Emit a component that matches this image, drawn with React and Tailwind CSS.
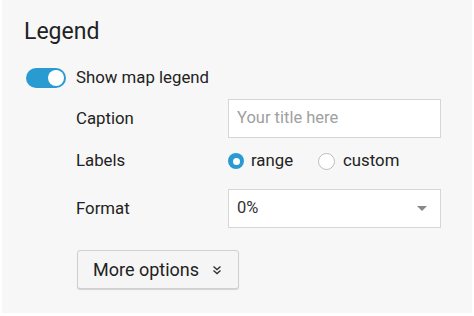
export default function App() {
  return (
    <div className="w-[474px] h-[316px] bg-white" style={{ fontFamily: "Roboto, 'Liberation Sans', sans-serif" }}>
      <div className="ml-[2px] w-[470px] h-[313px] bg-[#f7f7f7] pl-[22px] pt-[17px] text-[#222]">
        <h2 className="text-[23px] leading-[30px] font-normal">Legend</h2>
        <div className="mt-[20px] flex items-center h-[22px]">
          <div className="ml-[2px] w-[40px] h-[20px] rounded-full bg-[#2a9bd0] flex items-center justify-end pr-[2px]">
            <div className="w-[16px] h-[16px] rounded-full bg-white" />
          </div>
          <span className="ml-[10px] text-[16.8px]">Show map legend</span>
        </div>
        <div className="pl-[52px]">
          <div className="mt-[10px] flex items-center h-[39px]">
            <span className="w-[152px] text-[16.8px]">Caption</span>
            <div className="w-[213px] h-[39px] bg-white border border-[#d6d6d6] flex items-center px-[8px] text-[16.5px] text-[#a0a0a0]">Your title here</div>
          </div>
          <div className="mt-[6px] flex items-center h-[34px]">
            <span className="w-[152px] text-[16.8px]">Labels</span>
            <div className="flex items-center">
              <div className="w-[16px] h-[16px] rounded-full bg-[#2a9bd0] flex items-center justify-center">
                <div className="w-[7px] h-[7px] rounded-full bg-white" />
              </div>
              <span className="ml-[7px] text-[16.8px]">range</span>
              <div className="ml-[25px] w-[17px] h-[17px] rounded-full border border-[#bdbdbd] bg-white" />
              <span className="ml-[8px] text-[16.8px]">custom</span>
            </div>
          </div>
          <div className="mt-[11px] flex items-center h-[39px]">
            <span className="w-[152px] text-[16.8px]">Format</span>
            <div className="w-[213px] h-[39px] bg-white border border-[#d6d6d6] flex items-center justify-between pl-[8px] pr-[13px] text-[16.5px] text-[#333]">
              <span>0%</span>
              <div className="w-0 h-0 border-l-[5px] border-r-[5px] border-t-[5px] border-l-transparent border-r-transparent border-t-[#888]" />
            </div>
          </div>
          <div className="mt-[22px] ml-[1px] w-[162px] h-[39px] rounded-[3px] border border-[#d0d0d0] bg-[#f5f5f5] shadow-[0_1px_1px_rgba(0,0,0,0.15)] flex items-center pl-[15px] text-[18px] text-[#222]">
            <span>More options</span>
            <svg className="ml-[13px]" width="10" height="10" viewBox="0 0 10 10" fill="none" stroke="#333" strokeWidth="1.4">
              <path d="M1.5 1.5 L5 4.5 L8.5 1.5" />
              <path d="M1.5 5.5 L5 8.5 L8.5 5.5" />
            </svg>
          </div>
        </div>
      </div>
    </div>
  );
}
